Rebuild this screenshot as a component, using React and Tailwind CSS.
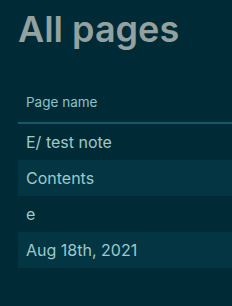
export default function App() {
  const rows = ['E/ test note', 'Contents', 'e', 'Aug 18th, 2021'];
  return (
    <div className="min-h-screen w-[232px] h-[306px] overflow-hidden bg-[#002b36] font-['Inter',sans-serif]">
      <div className="pl-[18px] pt-[7px]">
        <h1 className="text-[36px] font-semibold leading-[44px] text-[#93a1a1] whitespace-nowrap">All pages</h1>
        <div className="mt-[39px] h-[34px] pt-[2px] pl-[8px] text-[13.5px] leading-[20px] text-[#8fc0c8] border-b-2 border-[#16596a]">
          Page name
        </div>
        <div className="flex flex-col">
          {rows.map((r, i) => (
            <div
              key={r}
              className={`h-[36px] pl-[8px] flex items-center text-[16px] text-[#9ccaca] whitespace-nowrap ${i % 2 === 1 ? 'bg-[#033642]' : ''}`}
            >
              {r}
            </div>
          ))}
        </div>
      </div>
    </div>
  );
}
